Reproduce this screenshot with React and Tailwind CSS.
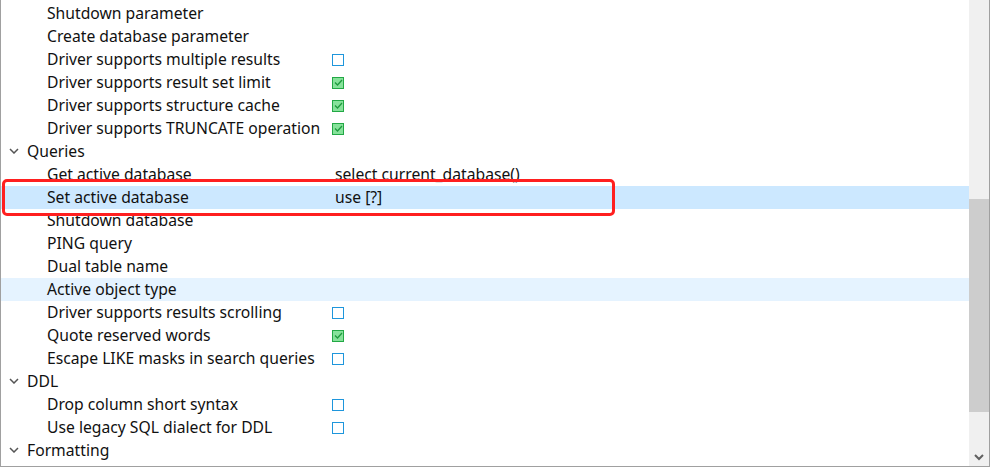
import React from "react";

const rows = [
  { level: 1, name: "Shutdown parameter" },
  { level: 1, name: "Create database parameter" },
  { level: 1, name: "Driver supports multiple results", check: false },
  { level: 1, name: "Driver supports result set limit", check: true },
  { level: 1, name: "Driver supports structure cache", check: true },
  { level: 1, name: "Driver supports TRUNCATE operation", check: true },
  { level: 0, name: "Queries" },
  { level: 1, name: "Get active database", value: "select current_database()" },
  { level: 1, name: "Set active database", value: "use [?]", state: "selected" },
  { level: 1, name: "Shutdown database" },
  { level: 1, name: "PING query" },
  { level: 1, name: "Dual table name" },
  { level: 1, name: "Active object type", state: "hover" },
  { level: 1, name: "Driver supports results scrolling", check: false },
  { level: 1, name: "Quote reserved words", check: true },
  { level: 1, name: "Escape LIKE masks in search queries", check: false },
  { level: 0, name: "DDL" },
  { level: 1, name: "Drop column short syntax", check: false },
  { level: 1, name: "Use legacy SQL dialect for DDL", check: false },
  { level: 0, name: "Formatting" },
];

function Chevron() {
  return (
    <svg width="10" height="6" viewBox="0 0 10 6" className="shrink-0">
      <path d="M1 1 L5 5 L9 1" fill="none" stroke="#555" strokeWidth="1.5" />
    </svg>
  );
}

function Check({ on }) {
  if (!on)
    return <div className="w-[12px] h-[12px] border border-[#1e96dc] bg-white" />;
  return (
    <div className="w-[12px] h-[12px] border border-[#22a845] bg-[#86e29a] flex items-center justify-center">
      <svg width="9" height="7" viewBox="0 0 9 7">
        <path d="M1 3.5 L3.5 6 L8 1" fill="none" stroke="#1f9a3e" strokeWidth="1.3" />
      </svg>
    </div>
  );
}

export default function App() {
  return (
    <div
      className="relative w-[990px] h-[467px] bg-white border-l border-r border-b border-[#a0a0a0] flex overflow-hidden text-[#111] text-[15.7px]"
      style={{ fontFamily: '"Noto Sans", "Open Sans", sans-serif' }}
    >
      <div className="flex-1 pt-[2px] flex flex-col">
        {rows.map((r, i) => (
          <div
            key={i}
            className={
              "h-[23px] shrink-0 flex items-center leading-none " +
              (r.state === "selected"
                ? "bg-[#cce8ff]"
                : r.state === "hover"
                ? "bg-[#e5f3ff]"
                : "")
            }
          >
            {r.level === 0 ? (
              <div className="flex items-center pl-[8px]">
                <Chevron />
                <span className="ml-[8px]">{r.name}</span>
              </div>
            ) : (
              <>
                <span className="pl-[46px] w-[331px] shrink-0 whitespace-nowrap">{r.name}</span>
                {r.value && <span className="pl-[3px] whitespace-nowrap">{r.value}</span>}
                {r.check !== undefined && <Check on={r.check} />}
              </>
            )}
          </div>
        ))}
      </div>
      <div className="w-[20px] bg-[#f0f0f0] flex flex-col shrink-0">
        <div className="h-[199px]" />
        <div className="h-[213px] bg-[#cdcdcd]" />
        <div className="flex-1 flex items-end justify-center pb-[5px]">
          <svg width="10" height="7" viewBox="0 0 10 7">
            <path d="M1 1 L5 5 L9 1" fill="none" stroke="#606060" strokeWidth="2" />
          </svg>
        </div>
      </div>
      <div className="absolute left-[1px] top-[179px] w-[613px] h-[37px] border-[3px] border-[#ff1f1f] rounded-[5px]" />
    </div>
  );
}
